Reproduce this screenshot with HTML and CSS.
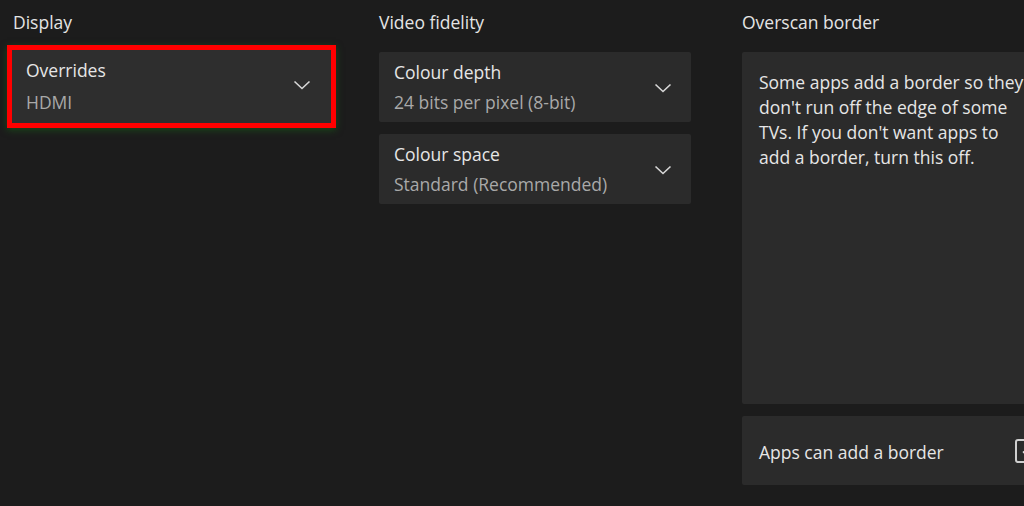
FILE: index.html
```html
<!doctype html>
<html>

<head>
  <title>Display &amp; sound</title>
  <link rel="stylesheet" href="styles.css">
</head>

<body>
  <main class="settings">
    <section class="column">
      <h3>Display</h3>
      <div class="card select focused">
        <div class="label">
          <span class="name">Overrides</span>
          <span class="value">HDMI</span>
        </div>
        <svg class="chevron" viewBox="0 0 18 10"><path d="M1.5 1.5 L9 8.5 L16.5 1.5"/></svg>
      </div>
    </section>

    <section class="column">
      <h3>Video fidelity</h3>
      <div class="stack">
        <div class="card select">
          <div class="label">
            <span class="name">Colour depth</span>
            <span class="value">24 bits per pixel (8-bit)</span>
          </div>
          <svg class="chevron" viewBox="0 0 18 10"><path d="M1.5 1.5 L9 8.5 L16.5 1.5"/></svg>
        </div>
        <div class="card select">
          <div class="label">
            <span class="name">Colour space</span>
            <span class="value">Standard (Recommended)</span>
          </div>
          <svg class="chevron" viewBox="0 0 18 10"><path d="M1.5 1.5 L9 8.5 L16.5 1.5"/></svg>
        </div>
      </div>
    </section>

    <section class="column wide">
      <h3>Overscan border</h3>
      <div class="stack loose">
        <div class="card info">
          <p>Some apps add a border so they<br>don't run off the edge of some<br>TVs. If you don't want apps to<br>add a border, turn this off.</p>
        </div>
        <div class="card toggle">
          <span class="name">Apps can add a border</span>
          <span class="checkbox">
            <svg viewBox="0 0 14 14"><path d="M3 7.5 L6 10.5 L11.5 4"/></svg>
          </span>
        </div>
      </div>
    </section>
  </main>
</body>

</html>
```

FILE: styles.css
```css
*,
*::before,
*::after {
  box-sizing: border-box;
}

html {
  font-family: "Open Sans", "Noto Sans", sans-serif;
  font-size: 17.5px;
}

body {
  margin: 0;
  width: 1024px;
  height: 506px;
  overflow: hidden;
  background: #1c1c1c;
  color: #e6e6e6;
}

.settings {
  display: grid;
  grid-template-columns: 366px 363px 320px;
  padding: 10px 0 0 13px;
}

h3 {
  margin: 0 0 18px;
  font-size: 17.5px;
  font-weight: 400;
  line-height: 24px;
  color: #e4e4e4;
}

.stack {
  display: flex;
  flex-direction: column;
  gap: 12px;
}

.stack.loose {
  gap: 11px;
  margin-top: 1px;
}

.card {
  background: #2b2b2b;
  border-radius: 2px;
}

.select {
  width: 312px;
  height: 70px;
  padding: 5px 19px 5px 15px;
  display: flex;
  align-items: center;
  justify-content: space-between;
}

.label {
  display: flex;
  flex-direction: column;
  line-height: 30px;
}

.value {
  color: #a9a9a9;
}

.chevron {
  width: 18px;
  height: 10px;
  margin-top: 1px;
  fill: none;
  stroke: #d8d8d8;
  stroke-width: 1.6;
}

/* focused tile: slightly enlarged with the red focus ring */
.focused {
  width: 319px;
  height: 73px;
  margin: -2px 0 0 -1px;
  padding: 4px 20px 5px 14px;
  background: #2e2e2e;
  border-radius: 0;
  outline: 5px solid #ff0000;
  box-shadow: 0 2px 7px 5px rgba(24, 110, 24, 0.55);
}

.focused .label {
  line-height: 32px;
}

.focused .chevron {
  margin-top: -2px;
}

.info {
  height: 352px;
  padding: 18px 17px;
}

.info p {
  margin: 0;
  line-height: 25px;
  white-space: nowrap;
}

.toggle {
  height: 69px;
  margin-top: 1px;
  padding: 2px 0 0 17px;
  display: flex;
  align-items: center;
  gap: 71px;
}

.checkbox {
  width: 24px;
  height: 24px;
  margin-top: -2px;
  border: 2px solid #cfcfcf;
  border-radius: 3px;
  display: flex;
  align-items: center;
  justify-content: center;
}

.checkbox svg {
  width: 14px;
  height: 14px;
  fill: none;
  stroke: #e6e6e6;
  stroke-width: 1.6;
}
```
